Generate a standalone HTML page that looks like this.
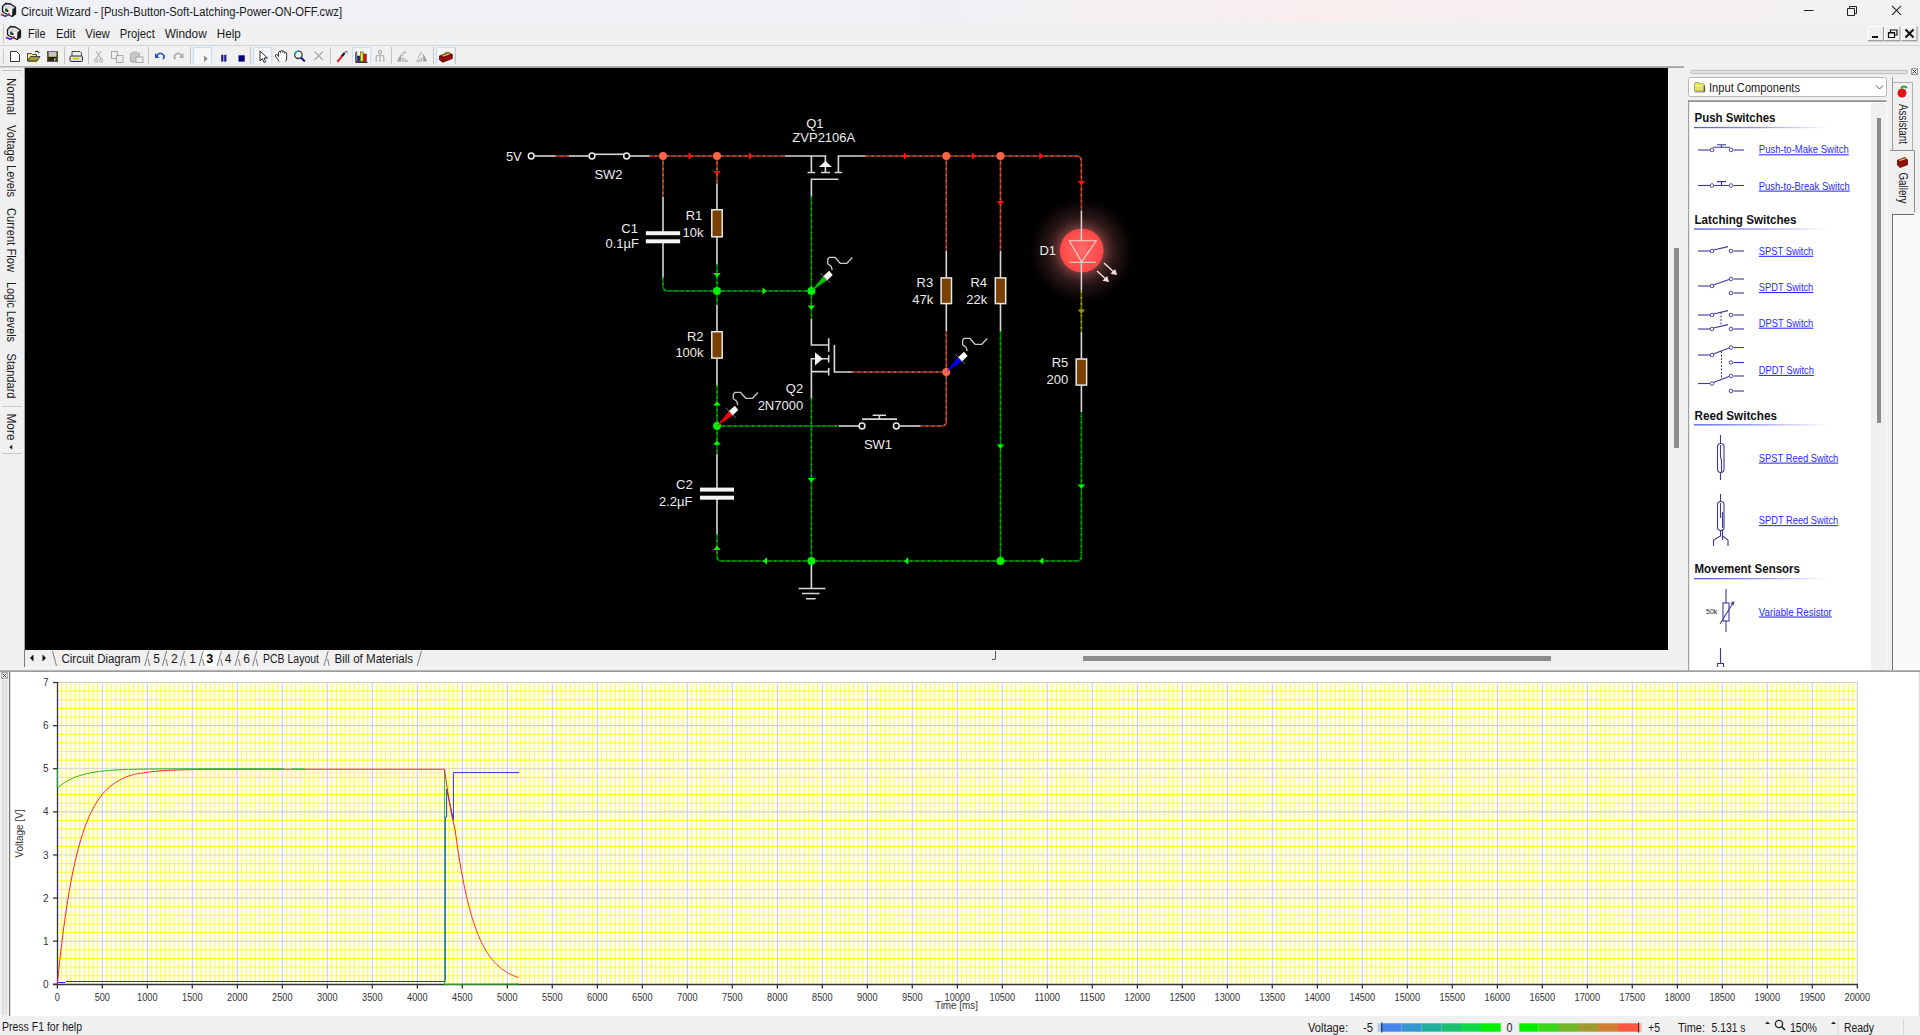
<!DOCTYPE html>
<html><head><meta charset="utf-8"><title>Circuit Wizard</title>
<style>html,body{margin:0;padding:0;width:1920px;height:1035px;overflow:hidden;background:#f0f0f0}
svg{display:block;font-family:"Liberation Sans",sans-serif}</style></head>
<body><svg width="1920" height="1035" viewBox="0 0 1920 1035"><rect x="0" y="0" width="1920" height="1035" fill="#f0f0f0"/><defs><linearGradient id="tg" x1="0" x2="1" y1="0" y2="0"><stop offset="0" stop-color="#eef1f6"/><stop offset="0.5" stop-color="#f0f0f4"/><stop offset="0.68" stop-color="#f8eeee"/><stop offset="0.85" stop-color="#f6f0f0"/><stop offset="1" stop-color="#f2f2f3"/></linearGradient></defs><rect x="0" y="0" width="1920" height="22" fill="url(#tg)" /><text x="21" y="15.5" font-size="12" fill="#1a1a1a" font-weight="normal" text-anchor="start" textLength="321" lengthAdjust="spacingAndGlyphs" >Circuit Wizard - [Push-Button-Soft-Latching-Power-ON-OFF.cwz]</text><line x1="0" y1="45.5" x2="1920" y2="45.5" stroke="#d4d4d4" stroke-width="1" /><line x1="3.5" y1="24" x2="3.5" y2="43" stroke="#c8c8c8" stroke-width="1" /><text x="28" y="38.3" font-size="12" fill="#1a1a1a" font-weight="normal" text-anchor="start" textLength="17.5" lengthAdjust="spacingAndGlyphs" >File</text><text x="56" y="38.3" font-size="12" fill="#1a1a1a" font-weight="normal" text-anchor="start" textLength="19.5" lengthAdjust="spacingAndGlyphs" >Edit</text><text x="85.3" y="38.3" font-size="12" fill="#1a1a1a" font-weight="normal" text-anchor="start" textLength="24.5" lengthAdjust="spacingAndGlyphs" >View</text><text x="119.8" y="38.3" font-size="12" fill="#1a1a1a" font-weight="normal" text-anchor="start" textLength="35" lengthAdjust="spacingAndGlyphs" >Project</text><text x="164.7" y="38.3" font-size="12" fill="#1a1a1a" font-weight="normal" text-anchor="start" textLength="42" lengthAdjust="spacingAndGlyphs" >Window</text><text x="216.8" y="38.3" font-size="12" fill="#1a1a1a" font-weight="normal" text-anchor="start" textLength="24" lengthAdjust="spacingAndGlyphs" >Help</text><rect x="0" y="66" width="1684" height="1.5" fill="#b4b4b4" /><path d="M1803.8,10.5 H1813.5" stroke="#222" stroke-width="1"/><path d="M1847.5,8.5 h7 v7 h-7 z" fill="none" stroke="#222" stroke-width="1"/><path d="M1849.5,8.5 v-2 h7 v7 h-2" fill="none" stroke="#222" stroke-width="1"/><path d="M1892,5.8 L1901,14.8 M1901,5.8 L1892,14.8" stroke="#222" stroke-width="1.1"/><rect x="1868" y="26.5" width="15.5" height="14" fill="#f0f0f0"/><path d="M1868,40.5 V26.5 H1883.5" stroke="#ffffff" stroke-width="1" fill="none"/><path d="M1883.5,26.5 V40.5 H1868" stroke="#a0a0a0" stroke-width="1.2" fill="none"/><path d="M1884.5,27 V41.5 H1868.5" stroke="#d0d0d0" stroke-width="1" fill="none"/><rect x="1884.5" y="26.5" width="15.5" height="14" fill="#f0f0f0"/><path d="M1884.5,40.5 V26.5 H1900.0" stroke="#ffffff" stroke-width="1" fill="none"/><path d="M1900.0,26.5 V40.5 H1884.5" stroke="#a0a0a0" stroke-width="1.2" fill="none"/><path d="M1901.0,27 V41.5 H1885.0" stroke="#d0d0d0" stroke-width="1" fill="none"/><rect x="1901.5" y="26.5" width="15.5" height="14" fill="#f0f0f0"/><path d="M1901.5,40.5 V26.5 H1917.0" stroke="#ffffff" stroke-width="1" fill="none"/><path d="M1917.0,26.5 V40.5 H1901.5" stroke="#a0a0a0" stroke-width="1.2" fill="none"/><path d="M1918.0,27 V41.5 H1902.0" stroke="#d0d0d0" stroke-width="1" fill="none"/><rect x="1872" y="36" width="6" height="2" fill="#111"/><path d="M1888.5,32.5 h6 v5 h-6 z M1890.5,32.5 v-2.5 h6.5 v5 h-2" fill="none" stroke="#111" stroke-width="1.2"/><rect x="1888.5" y="32" width="6" height="1.5" fill="#111"/><path d="M1905.5,29.5 L1913.5,37.5 M1913.5,29.5 L1905.5,37.5" stroke="#111" stroke-width="2"/><line x1="3.5" y1="49" x2="3.5" y2="64" stroke="#c8c8c8" stroke-width="1" /><rect x="25" y="67" width="1659" height="1" fill="#a0a0a0" /><rect x="24" y="67" width="1" height="583" fill="#a0a0a0" /><rect x="25" y="68" width="1643" height="582" fill="#000" /><rect x="0" y="68" width="24" height="583" fill="#f0f0f0" /><line x1="2" y1="70.5" x2="22" y2="70.5" stroke="#c0c0c0" stroke-width="1" /><text x="0" y="0" font-size="12" fill="#1a1a1a" text-anchor="middle" textLength="37" lengthAdjust="spacingAndGlyphs" transform="translate(7,96.5) rotate(90)">Normal</text><text x="0" y="0" font-size="12" fill="#1a1a1a" text-anchor="middle" textLength="72" lengthAdjust="spacingAndGlyphs" transform="translate(7,161) rotate(90)">Voltage Levels</text><text x="0" y="0" font-size="12" fill="#1a1a1a" text-anchor="middle" textLength="64" lengthAdjust="spacingAndGlyphs" transform="translate(7,240) rotate(90)">Current Flow</text><text x="0" y="0" font-size="12" fill="#1a1a1a" text-anchor="middle" textLength="60" lengthAdjust="spacingAndGlyphs" transform="translate(7,312) rotate(90)">Logic Levels</text><text x="0" y="0" font-size="12" fill="#1a1a1a" text-anchor="middle" textLength="45" lengthAdjust="spacingAndGlyphs" transform="translate(7,376) rotate(90)">Standard</text><line x1="2" y1="406.5" x2="22" y2="406.5" stroke="#c8c8c8" stroke-width="1" /><text x="0" y="0" font-size="12" fill="#1a1a1a" text-anchor="middle" textLength="27" lengthAdjust="spacingAndGlyphs" transform="translate(7,427) rotate(90)">More</text><path d="M12.2,444.8 L9.4,447.2 L12.2,449.6 Z" fill="#111"/><line x1="2" y1="453.5" x2="22" y2="453.5" stroke="#c8c8c8" stroke-width="1" /><rect x="1668" y="68" width="15" height="583" fill="#f0f0f0" /><rect x="1674" y="248" width="5" height="200" fill="#8c8c8c" /><rect x="1684" y="68" width="236" height="602" fill="#f0f0f0" /><rect x="1690.5" y="70.3" width="217" height="3.4" rx="1.6" fill="#dedede" stroke="#b4b4b4" stroke-width="0.8"/><path d="M1911.5,68.5 h6 v6 h-6 z" fill="none" stroke="#888" stroke-width="0.8"/><path d="M1912.5,69.5 l4,4 M1916.5,69.5 l-4,4" stroke="#333" stroke-width="1"/><rect x="1688.5" y="77.5" width="198" height="19" rx="2" fill="#fff" stroke="#b8b8b8"/><path d="M1694.5,84 q0,-1.5 1.5,-1.5 h3 l1,1.2 h3.5 l1.2,1 v6.3 h-10.2 z" fill="#e4e450" stroke="#777" stroke-width="0.6"/><path d="M1703.8,85.5 l0.8,0.5 v6.3 h-9.5 l-0.6,-0.6 h9.3 z" fill="#111"/><rect x="1695.5" y="85" width="7" height="1.2" fill="#f8f8a0"/><text x="1709" y="91.5" font-size="12" fill="#1a1a1a" font-weight="normal" text-anchor="start" textLength="91" lengthAdjust="spacingAndGlyphs" >Input Components</text><path d="M1876,85.5 l3.5,3.5 l3.5,-3.5" fill="none" stroke="#555" stroke-width="1"/><rect x="1688" y="100" width="199" height="571" fill="#ffffff" /><rect x="1688" y="100" width="1.2" height="571" fill="#a0a0a0" /><rect x="1688" y="100.3" width="199" height="1.7" fill="#8e8e8e" /><rect x="1886.5" y="100" width="1" height="571" fill="#f4f4f4" /><rect x="1871" y="103" width="15" height="568" fill="#f0f0f0" /><rect x="1877" y="118" width="4" height="305" fill="#8c8c8c" /><rect x="1893" y="214" width="27" height="456" fill="#f9f9f9" /><rect x="1892" y="214" width="1" height="456" fill="#707070" /><rect x="1892" y="214" width="22" height="1" fill="#707070" /><rect x="1892" y="77" width="1" height="73" fill="#9a9a9a" /><path d="M1892.5,82.5 h20 v68" fill="none" stroke="#b0b0b0" stroke-width="1"/><path d="M1890,150.5 h24.5 v62" fill="none" stroke="#909090" stroke-width="1"/><circle cx="1902" cy="93" r="4.5" fill="#d81818"/><path d="M1901,88 q3,-3 6,0" stroke="#2a9a2a" stroke-width="2" fill="none"/><text x="0" y="0" font-size="12" fill="#1a1a1a" text-anchor="middle" textLength="40" lengthAdjust="spacingAndGlyphs" transform="translate(1898.5,124) rotate(90)">Assistant</text><path d="M1897,160 l8,-3 l3,3 v5 l-8,3 l-3,-3 z" fill="#8a1010"/><path d="M1899,160 l6,-2 l1,1 l-6,2 z" fill="#e0d040"/><text x="0" y="0" font-size="12" fill="#1a1a1a" text-anchor="middle" textLength="31" lengthAdjust="spacingAndGlyphs" transform="translate(1898.5,188) rotate(90)">Gallery</text><rect x="25" y="650" width="971" height="17" fill="#f0f0f0" /><rect x="24" y="650" width="1" height="17" fill="#808080" /><path d="M30,658 l3.5,-3.5 v7 z" fill="#111"/><path d="M46,658 l-3.5,-3.5 v7 z" fill="#111"/><path d="M201,651 h18.5 l-3,15.5 h-12 z" fill="#ffffff"/><path d="M52.5,651 l4,15" stroke="#707070" stroke-width="0.9"/><path d="M144.6,666 L148.79999999999998,651 M148.2,659 L149.79999999999998,666" stroke="#707070" stroke-width="0.9" fill="none"/><path d="M162.4,666 L166.6,651 M166.0,659 L167.6,666" stroke="#707070" stroke-width="0.9" fill="none"/><path d="M180.2,666 L184.39999999999998,651 M183.79999999999998,659 L185.39999999999998,666" stroke="#707070" stroke-width="0.9" fill="none"/><path d="M199,666 L203.2,651 M202.6,659 L204.2,666" stroke="#707070" stroke-width="0.9" fill="none"/><path d="M217.2,666 L221.39999999999998,651 M220.79999999999998,659 L222.39999999999998,666" stroke="#707070" stroke-width="0.9" fill="none"/><path d="M235,666 L239.2,651 M238.6,659 L240.2,666" stroke="#707070" stroke-width="0.9" fill="none"/><path d="M252.6,666 L256.8,651 M256.2,659 L257.8,666" stroke="#707070" stroke-width="0.9" fill="none"/><path d="M324,666 L328.2,651 M327.6,659 L329.2,666" stroke="#707070" stroke-width="0.9" fill="none"/><path d="M417.2,666 L421.4,651" stroke="#707070" stroke-width="0.9"/><rect x="25" y="667" width="1659" height="1.2" fill="#f8f8f8" /><text x="61.5" y="662.5" font-size="12" fill="#1a1a1a" font-weight="normal" text-anchor="start" textLength="79" lengthAdjust="spacingAndGlyphs" >Circuit Diagram</text><text x="153.2" y="662.5" font-size="12" fill="#1a1a1a" font-weight="normal" text-anchor="start" textLength="6.7" lengthAdjust="spacingAndGlyphs" >5</text><text x="171" y="662.5" font-size="12" fill="#1a1a1a" font-weight="normal" text-anchor="start" textLength="6.7" lengthAdjust="spacingAndGlyphs" >2</text><text x="189.2" y="662.5" font-size="12" fill="#1a1a1a" font-weight="normal" text-anchor="start" textLength="6.7" lengthAdjust="spacingAndGlyphs" >1</text><text x="224.8" y="662.5" font-size="12" fill="#1a1a1a" font-weight="normal" text-anchor="start" textLength="6.7" lengthAdjust="spacingAndGlyphs" >4</text><text x="243.2" y="662.5" font-size="12" fill="#1a1a1a" font-weight="normal" text-anchor="start" textLength="6.7" lengthAdjust="spacingAndGlyphs" >6</text><text x="206.2" y="662.5" font-size="12" fill="#000" font-weight="bold" text-anchor="start" textLength="7" lengthAdjust="spacingAndGlyphs" >3</text><text x="263" y="662.5" font-size="12" fill="#1a1a1a" font-weight="normal" text-anchor="start" textLength="56" lengthAdjust="spacingAndGlyphs" >PCB Layout</text><text x="334.5" y="662.5" font-size="12" fill="#1a1a1a" font-weight="normal" text-anchor="start" textLength="78.5" lengthAdjust="spacingAndGlyphs" >Bill of Materials</text><path d="M995.5,651 v8 q0,0.5 -0.5,0.5 h-3" stroke="#555" stroke-width="1" fill="none"/><rect x="1083" y="656" width="468" height="5" fill="#8c8c8c" /><rect x="0" y="670.3" width="1920" height="1.7" fill="#9c9c9c" /><rect x="0" y="672" width="10" height="344" fill="#f0f0f0" /><rect x="9" y="672" width="1.5" height="344" fill="#7a7a7a" /><rect x="10.5" y="672" width="1908.5" height="344" fill="#ffffff" /><rect x="1918.5" y="672" width="1.5" height="344" fill="#e0e0e0" /><path d="M1.5,672.5 h6 v6 h-6 z" fill="none" stroke="#999" stroke-width="0.8"/><path d="M2.5,673.5 l4,4 M6.5,673.5 l-4,4" stroke="#444" stroke-width="1"/><rect x="2.5" y="680" width="1" height="335" fill="#c8c8c8" /><rect x="5.5" y="680" width="1" height="335" fill="#c8c8c8" /><path d="M61.80,682.5V984M66.30,682.5V984M70.80,682.5V984M75.30,682.5V984M79.80,682.5V984M84.30,682.5V984M88.80,682.5V984M93.30,682.5V984M97.80,682.5V984M106.80,682.5V984M111.30,682.5V984M115.80,682.5V984M120.30,682.5V984M124.80,682.5V984M129.30,682.5V984M133.80,682.5V984M138.30,682.5V984M142.80,682.5V984M151.80,682.5V984M156.30,682.5V984M160.80,682.5V984M165.30,682.5V984M169.80,682.5V984M174.30,682.5V984M178.80,682.5V984M183.30,682.5V984M187.80,682.5V984M196.80,682.5V984M201.30,682.5V984M205.80,682.5V984M210.30,682.5V984M214.80,682.5V984M219.30,682.5V984M223.80,682.5V984M228.30,682.5V984M232.80,682.5V984M241.80,682.5V984M246.30,682.5V984M250.80,682.5V984M255.30,682.5V984M259.80,682.5V984M264.30,682.5V984M268.80,682.5V984M273.30,682.5V984M277.80,682.5V984M286.80,682.5V984M291.30,682.5V984M295.80,682.5V984M300.30,682.5V984M304.80,682.5V984M309.30,682.5V984M313.80,682.5V984M318.30,682.5V984M322.80,682.5V984M331.80,682.5V984M336.30,682.5V984M340.80,682.5V984M345.30,682.5V984M349.80,682.5V984M354.30,682.5V984M358.80,682.5V984M363.30,682.5V984M367.80,682.5V984M376.80,682.5V984M381.30,682.5V984M385.80,682.5V984M390.30,682.5V984M394.80,682.5V984M399.30,682.5V984M403.80,682.5V984M408.30,682.5V984M412.80,682.5V984M421.80,682.5V984M426.30,682.5V984M430.80,682.5V984M435.30,682.5V984M439.80,682.5V984M444.30,682.5V984M448.80,682.5V984M453.30,682.5V984M457.80,682.5V984M466.80,682.5V984M471.30,682.5V984M475.80,682.5V984M480.30,682.5V984M484.80,682.5V984M489.30,682.5V984M493.80,682.5V984M498.30,682.5V984M502.80,682.5V984M511.80,682.5V984M516.30,682.5V984M520.80,682.5V984M525.30,682.5V984M529.80,682.5V984M534.30,682.5V984M538.80,682.5V984M543.30,682.5V984M547.80,682.5V984M556.80,682.5V984M561.30,682.5V984M565.80,682.5V984M570.30,682.5V984M574.80,682.5V984M579.30,682.5V984M583.80,682.5V984M588.30,682.5V984M592.80,682.5V984M601.80,682.5V984M606.30,682.5V984M610.80,682.5V984M615.30,682.5V984M619.80,682.5V984M624.30,682.5V984M628.80,682.5V984M633.30,682.5V984M637.80,682.5V984M646.80,682.5V984M651.30,682.5V984M655.80,682.5V984M660.30,682.5V984M664.80,682.5V984M669.30,682.5V984M673.80,682.5V984M678.30,682.5V984M682.80,682.5V984M691.80,682.5V984M696.30,682.5V984M700.80,682.5V984M705.30,682.5V984M709.80,682.5V984M714.30,682.5V984M718.80,682.5V984M723.30,682.5V984M727.80,682.5V984M736.80,682.5V984M741.30,682.5V984M745.80,682.5V984M750.30,682.5V984M754.80,682.5V984M759.30,682.5V984M763.80,682.5V984M768.30,682.5V984M772.80,682.5V984M781.80,682.5V984M786.30,682.5V984M790.80,682.5V984M795.30,682.5V984M799.80,682.5V984M804.30,682.5V984M808.80,682.5V984M813.30,682.5V984M817.80,682.5V984M826.80,682.5V984M831.30,682.5V984M835.80,682.5V984M840.30,682.5V984M844.80,682.5V984M849.30,682.5V984M853.80,682.5V984M858.30,682.5V984M862.80,682.5V984M871.80,682.5V984M876.30,682.5V984M880.80,682.5V984M885.30,682.5V984M889.80,682.5V984M894.30,682.5V984M898.80,682.5V984M903.30,682.5V984M907.80,682.5V984M916.80,682.5V984M921.30,682.5V984M925.80,682.5V984M930.30,682.5V984M934.80,682.5V984M939.30,682.5V984M943.80,682.5V984M948.30,682.5V984M952.80,682.5V984M961.80,682.5V984M966.30,682.5V984M970.80,682.5V984M975.30,682.5V984M979.80,682.5V984M984.30,682.5V984M988.80,682.5V984M993.30,682.5V984M997.80,682.5V984M1006.80,682.5V984M1011.30,682.5V984M1015.80,682.5V984M1020.30,682.5V984M1024.80,682.5V984M1029.30,682.5V984M1033.80,682.5V984M1038.30,682.5V984M1042.80,682.5V984M1051.80,682.5V984M1056.30,682.5V984M1060.80,682.5V984M1065.30,682.5V984M1069.80,682.5V984M1074.30,682.5V984M1078.80,682.5V984M1083.30,682.5V984M1087.80,682.5V984M1096.80,682.5V984M1101.30,682.5V984M1105.80,682.5V984M1110.30,682.5V984M1114.80,682.5V984M1119.30,682.5V984M1123.80,682.5V984M1128.30,682.5V984M1132.80,682.5V984M1141.80,682.5V984M1146.30,682.5V984M1150.80,682.5V984M1155.30,682.5V984M1159.80,682.5V984M1164.30,682.5V984M1168.80,682.5V984M1173.30,682.5V984M1177.80,682.5V984M1186.80,682.5V984M1191.30,682.5V984M1195.80,682.5V984M1200.30,682.5V984M1204.80,682.5V984M1209.30,682.5V984M1213.80,682.5V984M1218.30,682.5V984M1222.80,682.5V984M1231.80,682.5V984M1236.30,682.5V984M1240.80,682.5V984M1245.30,682.5V984M1249.80,682.5V984M1254.30,682.5V984M1258.80,682.5V984M1263.30,682.5V984M1267.80,682.5V984M1276.80,682.5V984M1281.30,682.5V984M1285.80,682.5V984M1290.30,682.5V984M1294.80,682.5V984M1299.30,682.5V984M1303.80,682.5V984M1308.30,682.5V984M1312.80,682.5V984M1321.80,682.5V984M1326.30,682.5V984M1330.80,682.5V984M1335.30,682.5V984M1339.80,682.5V984M1344.30,682.5V984M1348.80,682.5V984M1353.30,682.5V984M1357.80,682.5V984M1366.80,682.5V984M1371.30,682.5V984M1375.80,682.5V984M1380.30,682.5V984M1384.80,682.5V984M1389.30,682.5V984M1393.80,682.5V984M1398.30,682.5V984M1402.80,682.5V984M1411.80,682.5V984M1416.30,682.5V984M1420.80,682.5V984M1425.30,682.5V984M1429.80,682.5V984M1434.30,682.5V984M1438.80,682.5V984M1443.30,682.5V984M1447.80,682.5V984M1456.80,682.5V984M1461.30,682.5V984M1465.80,682.5V984M1470.30,682.5V984M1474.80,682.5V984M1479.30,682.5V984M1483.80,682.5V984M1488.30,682.5V984M1492.80,682.5V984M1501.80,682.5V984M1506.30,682.5V984M1510.80,682.5V984M1515.30,682.5V984M1519.80,682.5V984M1524.30,682.5V984M1528.80,682.5V984M1533.30,682.5V984M1537.80,682.5V984M1546.80,682.5V984M1551.30,682.5V984M1555.80,682.5V984M1560.30,682.5V984M1564.80,682.5V984M1569.30,682.5V984M1573.80,682.5V984M1578.30,682.5V984M1582.80,682.5V984M1591.80,682.5V984M1596.30,682.5V984M1600.80,682.5V984M1605.30,682.5V984M1609.80,682.5V984M1614.30,682.5V984M1618.80,682.5V984M1623.30,682.5V984M1627.80,682.5V984M1636.80,682.5V984M1641.30,682.5V984M1645.80,682.5V984M1650.30,682.5V984M1654.80,682.5V984M1659.30,682.5V984M1663.80,682.5V984M1668.30,682.5V984M1672.80,682.5V984M1681.80,682.5V984M1686.30,682.5V984M1690.80,682.5V984M1695.30,682.5V984M1699.80,682.5V984M1704.30,682.5V984M1708.80,682.5V984M1713.30,682.5V984M1717.80,682.5V984M1726.80,682.5V984M1731.30,682.5V984M1735.80,682.5V984M1740.30,682.5V984M1744.80,682.5V984M1749.30,682.5V984M1753.80,682.5V984M1758.30,682.5V984M1762.80,682.5V984M1771.80,682.5V984M1776.30,682.5V984M1780.80,682.5V984M1785.30,682.5V984M1789.80,682.5V984M1794.30,682.5V984M1798.80,682.5V984M1803.30,682.5V984M1807.80,682.5V984M1816.80,682.5V984M1821.30,682.5V984M1825.80,682.5V984M1830.30,682.5V984M1834.80,682.5V984M1839.30,682.5V984M1843.80,682.5V984M1848.30,682.5V984M1852.80,682.5V984" stroke="#ffff30" stroke-width="1.1" fill="none"/><path d="M57.5,975.68H1857M57.5,967.06H1857M57.5,958.43H1857M57.5,949.81H1857M57.5,932.57H1857M57.5,923.95H1857M57.5,915.32H1857M57.5,906.70H1857M57.5,889.46H1857M57.5,880.84H1857M57.5,872.21H1857M57.5,863.59H1857M57.5,846.35H1857M57.5,837.73H1857M57.5,829.10H1857M57.5,820.48H1857M57.5,803.24H1857M57.5,794.62H1857M57.5,785.99H1857M57.5,777.37H1857M57.5,760.13H1857M57.5,751.51H1857M57.5,742.88H1857M57.5,734.26H1857M57.5,717.02H1857M57.5,708.40H1857M57.5,699.77H1857M57.5,691.15H1857" stroke="#ffff30" stroke-width="1.1" fill="none"/><path d="M102.30,682.5V984M147.30,682.5V984M192.30,682.5V984M237.30,682.5V984M282.30,682.5V984M327.30,682.5V984M372.30,682.5V984M417.30,682.5V984M462.30,682.5V984M507.30,682.5V984M552.30,682.5V984M597.30,682.5V984M642.30,682.5V984M687.30,682.5V984M732.30,682.5V984M777.30,682.5V984M822.30,682.5V984M867.30,682.5V984M912.30,682.5V984M957.30,682.5V984M1002.30,682.5V984M1047.30,682.5V984M1092.30,682.5V984M1137.30,682.5V984M1182.30,682.5V984M1227.30,682.5V984M1272.30,682.5V984M1317.30,682.5V984M1362.30,682.5V984M1407.30,682.5V984M1452.30,682.5V984M1497.30,682.5V984M1542.30,682.5V984M1587.30,682.5V984M1632.30,682.5V984M1677.30,682.5V984M1722.30,682.5V984M1767.30,682.5V984M1812.30,682.5V984M1857.30,682.5V984M57.5,941.19H1857M57.5,898.08H1857M57.5,854.97H1857M57.5,811.86H1857M57.5,768.75H1857M57.5,725.64H1857M57.5,682.53H1857" stroke="#cfcfcf" stroke-width="1.1" fill="none"/><line x1="57.5" y1="682" x2="57.5" y2="985" stroke="#333" stroke-width="1.3" /><line x1="53" y1="984.5" x2="1858" y2="984.5" stroke="#333" stroke-width="1.3" /><line x1="53" y1="984.3" x2="57.5" y2="984.3" stroke="#333" stroke-width="1.3" /><text x="48.5" y="987.9" font-size="10" fill="#333" font-weight="normal" text-anchor="end" >0</text><line x1="53" y1="941.1899999999999" x2="57.5" y2="941.1899999999999" stroke="#333" stroke-width="1.3" /><text x="48.5" y="944.79" font-size="10" fill="#333" font-weight="normal" text-anchor="end" >1</text><line x1="53" y1="898.0799999999999" x2="57.5" y2="898.0799999999999" stroke="#333" stroke-width="1.3" /><text x="48.5" y="901.68" font-size="10" fill="#333" font-weight="normal" text-anchor="end" >2</text><line x1="53" y1="854.97" x2="57.5" y2="854.97" stroke="#333" stroke-width="1.3" /><text x="48.5" y="858.57" font-size="10" fill="#333" font-weight="normal" text-anchor="end" >3</text><line x1="53" y1="811.8599999999999" x2="57.5" y2="811.8599999999999" stroke="#333" stroke-width="1.3" /><text x="48.5" y="815.4599999999999" font-size="10" fill="#333" font-weight="normal" text-anchor="end" >4</text><line x1="53" y1="768.75" x2="57.5" y2="768.75" stroke="#333" stroke-width="1.3" /><text x="48.5" y="772.35" font-size="10" fill="#333" font-weight="normal" text-anchor="end" >5</text><line x1="53" y1="725.64" x2="57.5" y2="725.64" stroke="#333" stroke-width="1.3" /><text x="48.5" y="729.24" font-size="10" fill="#333" font-weight="normal" text-anchor="end" >6</text><line x1="53" y1="682.53" x2="57.5" y2="682.53" stroke="#333" stroke-width="1.3" /><text x="48.5" y="686.13" font-size="10" fill="#333" font-weight="normal" text-anchor="end" >7</text><line x1="57.3" y1="984.5" x2="57.3" y2="988.5" stroke="#333" stroke-width="1.3" /><text x="57.3" y="1000.8" font-size="10" fill="#333" font-weight="normal" text-anchor="middle" textLength="5.1" lengthAdjust="spacingAndGlyphs" >0</text><line x1="102.3" y1="984.5" x2="102.3" y2="988.5" stroke="#333" stroke-width="1.3" /><text x="102.3" y="1000.8" font-size="10" fill="#333" font-weight="normal" text-anchor="middle" textLength="15.3" lengthAdjust="spacingAndGlyphs" >500</text><line x1="147.3" y1="984.5" x2="147.3" y2="988.5" stroke="#333" stroke-width="1.3" /><text x="147.3" y="1000.8" font-size="10" fill="#333" font-weight="normal" text-anchor="middle" textLength="20.4" lengthAdjust="spacingAndGlyphs" >1000</text><line x1="192.3" y1="984.5" x2="192.3" y2="988.5" stroke="#333" stroke-width="1.3" /><text x="192.3" y="1000.8" font-size="10" fill="#333" font-weight="normal" text-anchor="middle" textLength="20.4" lengthAdjust="spacingAndGlyphs" >1500</text><line x1="237.3" y1="984.5" x2="237.3" y2="988.5" stroke="#333" stroke-width="1.3" /><text x="237.3" y="1000.8" font-size="10" fill="#333" font-weight="normal" text-anchor="middle" textLength="20.4" lengthAdjust="spacingAndGlyphs" >2000</text><line x1="282.3" y1="984.5" x2="282.3" y2="988.5" stroke="#333" stroke-width="1.3" /><text x="282.3" y="1000.8" font-size="10" fill="#333" font-weight="normal" text-anchor="middle" textLength="20.4" lengthAdjust="spacingAndGlyphs" >2500</text><line x1="327.3" y1="984.5" x2="327.3" y2="988.5" stroke="#333" stroke-width="1.3" /><text x="327.3" y="1000.8" font-size="10" fill="#333" font-weight="normal" text-anchor="middle" textLength="20.4" lengthAdjust="spacingAndGlyphs" >3000</text><line x1="372.3" y1="984.5" x2="372.3" y2="988.5" stroke="#333" stroke-width="1.3" /><text x="372.3" y="1000.8" font-size="10" fill="#333" font-weight="normal" text-anchor="middle" textLength="20.4" lengthAdjust="spacingAndGlyphs" >3500</text><line x1="417.3" y1="984.5" x2="417.3" y2="988.5" stroke="#333" stroke-width="1.3" /><text x="417.3" y="1000.8" font-size="10" fill="#333" font-weight="normal" text-anchor="middle" textLength="20.4" lengthAdjust="spacingAndGlyphs" >4000</text><line x1="462.3" y1="984.5" x2="462.3" y2="988.5" stroke="#333" stroke-width="1.3" /><text x="462.3" y="1000.8" font-size="10" fill="#333" font-weight="normal" text-anchor="middle" textLength="20.4" lengthAdjust="spacingAndGlyphs" >4500</text><line x1="507.3" y1="984.5" x2="507.3" y2="988.5" stroke="#333" stroke-width="1.3" /><text x="507.3" y="1000.8" font-size="10" fill="#333" font-weight="normal" text-anchor="middle" textLength="20.4" lengthAdjust="spacingAndGlyphs" >5000</text><line x1="552.3" y1="984.5" x2="552.3" y2="988.5" stroke="#333" stroke-width="1.3" /><text x="552.3" y="1000.8" font-size="10" fill="#333" font-weight="normal" text-anchor="middle" textLength="20.4" lengthAdjust="spacingAndGlyphs" >5500</text><line x1="597.3" y1="984.5" x2="597.3" y2="988.5" stroke="#333" stroke-width="1.3" /><text x="597.3" y="1000.8" font-size="10" fill="#333" font-weight="normal" text-anchor="middle" textLength="20.4" lengthAdjust="spacingAndGlyphs" >6000</text><line x1="642.3" y1="984.5" x2="642.3" y2="988.5" stroke="#333" stroke-width="1.3" /><text x="642.3" y="1000.8" font-size="10" fill="#333" font-weight="normal" text-anchor="middle" textLength="20.4" lengthAdjust="spacingAndGlyphs" >6500</text><line x1="687.3" y1="984.5" x2="687.3" y2="988.5" stroke="#333" stroke-width="1.3" /><text x="687.3" y="1000.8" font-size="10" fill="#333" font-weight="normal" text-anchor="middle" textLength="20.4" lengthAdjust="spacingAndGlyphs" >7000</text><line x1="732.3" y1="984.5" x2="732.3" y2="988.5" stroke="#333" stroke-width="1.3" /><text x="732.3" y="1000.8" font-size="10" fill="#333" font-weight="normal" text-anchor="middle" textLength="20.4" lengthAdjust="spacingAndGlyphs" >7500</text><line x1="777.3" y1="984.5" x2="777.3" y2="988.5" stroke="#333" stroke-width="1.3" /><text x="777.3" y="1000.8" font-size="10" fill="#333" font-weight="normal" text-anchor="middle" textLength="20.4" lengthAdjust="spacingAndGlyphs" >8000</text><line x1="822.3" y1="984.5" x2="822.3" y2="988.5" stroke="#333" stroke-width="1.3" /><text x="822.3" y="1000.8" font-size="10" fill="#333" font-weight="normal" text-anchor="middle" textLength="20.4" lengthAdjust="spacingAndGlyphs" >8500</text><line x1="867.3" y1="984.5" x2="867.3" y2="988.5" stroke="#333" stroke-width="1.3" /><text x="867.3" y="1000.8" font-size="10" fill="#333" font-weight="normal" text-anchor="middle" textLength="20.4" lengthAdjust="spacingAndGlyphs" >9000</text><line x1="912.3" y1="984.5" x2="912.3" y2="988.5" stroke="#333" stroke-width="1.3" /><text x="912.3" y="1000.8" font-size="10" fill="#333" font-weight="normal" text-anchor="middle" textLength="20.4" lengthAdjust="spacingAndGlyphs" >9500</text><line x1="957.3" y1="984.5" x2="957.3" y2="988.5" stroke="#333" stroke-width="1.3" /><text x="957.3" y="1000.8" font-size="10" fill="#333" font-weight="normal" text-anchor="middle" textLength="25.5" lengthAdjust="spacingAndGlyphs" >10000</text><line x1="1002.3" y1="984.5" x2="1002.3" y2="988.5" stroke="#333" stroke-width="1.3" /><text x="1002.3" y="1000.8" font-size="10" fill="#333" font-weight="normal" text-anchor="middle" textLength="25.5" lengthAdjust="spacingAndGlyphs" >10500</text><line x1="1047.3" y1="984.5" x2="1047.3" y2="988.5" stroke="#333" stroke-width="1.3" /><text x="1047.3" y="1000.8" font-size="10" fill="#333" font-weight="normal" text-anchor="middle" textLength="25.5" lengthAdjust="spacingAndGlyphs" >11000</text><line x1="1092.3" y1="984.5" x2="1092.3" y2="988.5" stroke="#333" stroke-width="1.3" /><text x="1092.3" y="1000.8" font-size="10" fill="#333" font-weight="normal" text-anchor="middle" textLength="25.5" lengthAdjust="spacingAndGlyphs" >11500</text><line x1="1137.3" y1="984.5" x2="1137.3" y2="988.5" stroke="#333" stroke-width="1.3" /><text x="1137.3" y="1000.8" font-size="10" fill="#333" font-weight="normal" text-anchor="middle" textLength="25.5" lengthAdjust="spacingAndGlyphs" >12000</text><line x1="1182.3" y1="984.5" x2="1182.3" y2="988.5" stroke="#333" stroke-width="1.3" /><text x="1182.3" y="1000.8" font-size="10" fill="#333" font-weight="normal" text-anchor="middle" textLength="25.5" lengthAdjust="spacingAndGlyphs" >12500</text><line x1="1227.3" y1="984.5" x2="1227.3" y2="988.5" stroke="#333" stroke-width="1.3" /><text x="1227.3" y="1000.8" font-size="10" fill="#333" font-weight="normal" text-anchor="middle" textLength="25.5" lengthAdjust="spacingAndGlyphs" >13000</text><line x1="1272.3" y1="984.5" x2="1272.3" y2="988.5" stroke="#333" stroke-width="1.3" /><text x="1272.3" y="1000.8" font-size="10" fill="#333" font-weight="normal" text-anchor="middle" textLength="25.5" lengthAdjust="spacingAndGlyphs" >13500</text><line x1="1317.3" y1="984.5" x2="1317.3" y2="988.5" stroke="#333" stroke-width="1.3" /><text x="1317.3" y="1000.8" font-size="10" fill="#333" font-weight="normal" text-anchor="middle" textLength="25.5" lengthAdjust="spacingAndGlyphs" >14000</text><line x1="1362.3" y1="984.5" x2="1362.3" y2="988.5" stroke="#333" stroke-width="1.3" /><text x="1362.3" y="1000.8" font-size="10" fill="#333" font-weight="normal" text-anchor="middle" textLength="25.5" lengthAdjust="spacingAndGlyphs" >14500</text><line x1="1407.3" y1="984.5" x2="1407.3" y2="988.5" stroke="#333" stroke-width="1.3" /><text x="1407.3" y="1000.8" font-size="10" fill="#333" font-weight="normal" text-anchor="middle" textLength="25.5" lengthAdjust="spacingAndGlyphs" >15000</text><line x1="1452.3" y1="984.5" x2="1452.3" y2="988.5" stroke="#333" stroke-width="1.3" /><text x="1452.3" y="1000.8" font-size="10" fill="#333" font-weight="normal" text-anchor="middle" textLength="25.5" lengthAdjust="spacingAndGlyphs" >15500</text><line x1="1497.3" y1="984.5" x2="1497.3" y2="988.5" stroke="#333" stroke-width="1.3" /><text x="1497.3" y="1000.8" font-size="10" fill="#333" font-weight="normal" text-anchor="middle" textLength="25.5" lengthAdjust="spacingAndGlyphs" >16000</text><line x1="1542.3" y1="984.5" x2="1542.3" y2="988.5" stroke="#333" stroke-width="1.3" /><text x="1542.3" y="1000.8" font-size="10" fill="#333" font-weight="normal" text-anchor="middle" textLength="25.5" lengthAdjust="spacingAndGlyphs" >16500</text><line x1="1587.3" y1="984.5" x2="1587.3" y2="988.5" stroke="#333" stroke-width="1.3" /><text x="1587.3" y="1000.8" font-size="10" fill="#333" font-weight="normal" text-anchor="middle" textLength="25.5" lengthAdjust="spacingAndGlyphs" >17000</text><line x1="1632.3" y1="984.5" x2="1632.3" y2="988.5" stroke="#333" stroke-width="1.3" /><text x="1632.3" y="1000.8" font-size="10" fill="#333" font-weight="normal" text-anchor="middle" textLength="25.5" lengthAdjust="spacingAndGlyphs" >17500</text><line x1="1677.3" y1="984.5" x2="1677.3" y2="988.5" stroke="#333" stroke-width="1.3" /><text x="1677.3" y="1000.8" font-size="10" fill="#333" font-weight="normal" text-anchor="middle" textLength="25.5" lengthAdjust="spacingAndGlyphs" >18000</text><line x1="1722.3" y1="984.5" x2="1722.3" y2="988.5" stroke="#333" stroke-width="1.3" /><text x="1722.3" y="1000.8" font-size="10" fill="#333" font-weight="normal" text-anchor="middle" textLength="25.5" lengthAdjust="spacingAndGlyphs" >18500</text><line x1="1767.3" y1="984.5" x2="1767.3" y2="988.5" stroke="#333" stroke-width="1.3" /><text x="1767.3" y="1000.8" font-size="10" fill="#333" font-weight="normal" text-anchor="middle" textLength="25.5" lengthAdjust="spacingAndGlyphs" >19000</text><line x1="1812.3" y1="984.5" x2="1812.3" y2="988.5" stroke="#333" stroke-width="1.3" /><text x="1812.3" y="1000.8" font-size="10" fill="#333" font-weight="normal" text-anchor="middle" textLength="25.5" lengthAdjust="spacingAndGlyphs" >19500</text><line x1="1857.3" y1="984.5" x2="1857.3" y2="988.5" stroke="#333" stroke-width="1.3" /><text x="1857.3" y="1000.8" font-size="10" fill="#333" font-weight="normal" text-anchor="middle" textLength="25.5" lengthAdjust="spacingAndGlyphs" >20000</text><text x="0" y="0" font-size="10" fill="#333" text-anchor="middle" transform="translate(23,833.5) rotate(-90)">Voltage [V]</text><text x="956.5" y="1008.7" font-size="10" fill="#333" font-weight="normal" text-anchor="middle" textLength="43" lengthAdjust="spacingAndGlyphs" >Time [ms]</text><path d="M57.30,982.50 L65.00,982.50 L66.00,981.50 L445.30,981.50 L445.30,817.00 L446.60,817.00 L446.60,789.00 L453.40,820.00 L453.40,772.60 L519.09,772.60" stroke="#3030f0" stroke-width="1.0" fill="none" stroke-linejoin="round"/><path d="M444.60,768.75 L444.60,984.30 L519.09,984.00" stroke="#20c020" stroke-width="1.0" fill="none" stroke-linejoin="round"/><path d="M57.30,984.30 L57.30,984.30 L58.79,969.65 L60.28,956.00 L61.77,943.27 L63.25,931.41 L64.74,920.36 L66.23,910.06 L67.72,900.45 L69.21,891.50 L70.70,883.16 L72.18,875.39 L73.67,868.14 L75.16,861.39 L76.65,855.09 L78.14,849.22 L79.63,843.75 L81.12,838.66 L82.60,833.91 L84.09,829.48 L85.58,825.35 L87.07,821.51 L88.56,817.92 L90.05,814.58 L91.53,811.46 L93.02,808.56 L94.51,805.86 L96.00,803.33 L97.49,800.98 L98.98,798.79 L100.47,796.75 L101.95,794.85 L103.44,793.08 L104.93,791.42 L106.42,789.88 L107.91,788.45 L109.40,787.11 L110.88,785.86 L112.37,784.70 L113.86,783.61 L115.35,782.60 L116.84,781.66 L118.33,780.78 L119.82,779.97 L121.30,779.20 L122.79,778.49 L124.28,777.83 L125.77,777.21 L127.26,776.64 L128.75,776.10 L130.23,775.60 L131.72,775.14 L133.21,774.70 L134.70,774.30 L136.19,773.92 L137.68,773.57 L139.17,773.24 L140.65,773.44 L142.14,773.15 L143.63,772.89 L145.12,772.64 L146.61,772.41 L148.10,772.20 L149.58,772.00 L151.07,771.81 L152.56,771.63 L154.05,771.47 L155.54,771.32 L157.03,771.18 L158.52,771.05 L160.00,770.93 L161.49,770.81 L162.98,770.71 L164.47,770.61 L165.96,770.52 L167.45,770.43 L168.93,770.35 L170.42,770.27 L171.91,770.21 L173.40,770.14 L174.89,770.08 L176.38,770.02 L177.87,769.97 L179.35,769.92 L180.84,769.88 L182.33,769.83 L183.82,769.79 L185.31,769.76 L186.80,769.72 L188.28,769.69 L189.77,769.66 L191.26,769.63 L192.75,769.61 L194.24,769.58 L195.73,769.56 L197.22,769.54 L198.70,769.52 L200.19,769.50 L201.68,769.48 L203.17,769.47 L204.66,769.45 L206.15,769.44 L207.63,769.43 L209.12,769.41 L210.61,769.40 L212.10,769.39 L213.59,769.38 L215.08,769.37 L216.57,769.37 L218.05,769.36 L219.54,769.35 L221.03,769.34 L222.52,769.34 L224.01,769.33 L225.50,769.33 L226.98,769.32 L228.47,769.32 L229.96,769.31 L231.45,769.31 L232.94,769.30 L234.43,769.30 L235.92,769.30 L237.40,769.29 L238.89,769.29 L240.38,769.29 L241.87,769.28 L243.36,769.28 L244.85,769.28 L246.33,769.28 L247.82,769.28 L249.31,769.27 L250.80,769.27 L252.29,769.27 L253.78,769.27 L255.27,769.27 L256.75,769.27 L258.24,769.27 L259.73,769.27 L261.22,769.26 L262.71,769.26 L264.20,769.26 L265.68,769.26 L267.17,769.26 L268.66,769.26 L270.15,769.26 L271.64,769.26 L273.13,769.26 L274.62,769.26 L276.10,769.26 L277.59,769.26 L279.08,769.26 L280.57,769.26 L282.06,769.26 L283.55,769.25 L285.03,769.25 L286.52,769.25 L288.01,769.25 L289.50,769.25 L290.99,769.25 L292.48,769.25 L293.97,769.25 L295.45,769.25 L296.94,769.25 L298.43,769.25 L299.92,769.25 L301.41,769.25 L302.90,769.25 L304.38,769.25 L305.87,769.25 L307.36,769.25 L308.85,769.25 L310.34,769.25 L311.83,769.25 L313.32,769.25 L314.80,769.25 L316.29,769.25 L317.78,769.25 L319.27,769.25 L320.76,769.25 L322.25,769.25 L323.73,769.25 L325.22,769.25 L326.71,769.25 L328.20,769.25 L329.69,769.25 L331.18,769.25 L332.67,769.25 L334.15,769.25 L335.64,769.25 L337.13,769.25 L338.62,769.25 L340.11,769.25 L341.60,769.25 L343.08,769.25 L344.57,769.25 L346.06,769.25 L347.55,769.25 L349.04,769.25 L350.53,769.25 L352.02,769.25 L353.50,769.25 L354.99,769.25 L356.48,769.25 L357.97,769.25 L359.46,769.25 L360.95,769.25 L362.43,769.25 L363.92,769.25 L365.41,769.25 L366.90,769.25 L368.39,769.25 L369.88,769.25 L371.37,769.25 L372.85,769.25 L374.34,769.25 L375.83,769.25 L377.32,769.25 L378.81,769.25 L380.30,769.25 L381.78,769.25 L383.27,769.25 L384.76,769.25 L386.25,769.25 L387.74,769.25 L389.23,769.25 L390.72,769.25 L392.20,769.25 L393.69,769.25 L395.18,769.25 L396.67,769.25 L398.16,769.25 L399.65,769.25 L401.13,769.25 L402.62,769.25 L404.11,769.25 L405.60,769.25 L407.09,769.25 L408.58,769.25 L410.07,769.25 L411.55,769.25 L413.04,769.25 L414.53,769.25 L416.02,769.25 L417.51,769.25 L419.00,769.25 L420.48,769.25 L421.97,769.25 L423.46,769.25 L424.95,769.25 L426.44,769.25 L427.93,769.25 L429.42,769.25 L430.90,769.25 L432.39,769.25 L433.88,769.25 L435.37,769.25 L436.86,769.25 L438.35,769.25 L439.83,769.25 L441.32,769.25 L442.81,769.25 L444.30,769.25 L444.50,769.25 L446.60,784.00 L449.00,799.50 L452.00,817.00 L455.00,829.10 L455.50,832.89 L456.00,836.58 L456.50,840.18 L457.00,843.70 L457.50,847.13 L458.00,850.47 L458.50,853.74 L459.00,856.92 L459.50,860.03 L460.00,863.06 L460.50,866.02 L461.00,868.90 L461.50,871.72 L462.00,874.46 L462.50,877.14 L463.00,879.75 L463.50,882.30 L464.00,884.79 L464.50,887.22 L465.00,889.59 L465.50,891.90 L466.00,894.15 L466.50,896.35 L467.00,898.49 L467.50,900.59 L468.00,902.63 L468.50,904.62 L469.00,906.56 L469.50,908.46 L470.00,910.31 L470.50,912.11 L471.00,913.87 L471.50,915.59 L472.00,917.27 L472.50,918.90 L473.00,920.50 L473.50,922.05 L474.00,923.57 L474.50,925.05 L475.00,926.50 L475.50,927.91 L476.00,929.28 L476.50,930.62 L477.00,931.93 L477.50,933.21 L478.00,934.46 L478.50,935.67 L479.00,936.86 L479.50,938.01 L480.00,939.14 L480.50,940.24 L481.00,941.32 L481.50,942.37 L482.00,943.39 L482.50,944.39 L483.00,945.36 L483.50,946.31 L484.00,947.24 L484.50,948.14 L485.00,949.02 L485.50,949.88 L486.00,950.72 L486.50,951.54 L487.00,952.34 L487.50,953.12 L488.00,953.88 L488.50,954.62 L489.00,955.35 L489.50,956.05 L490.00,956.74 L490.50,957.41 L491.00,958.07 L491.50,958.71 L492.00,959.33 L492.50,959.94 L493.00,960.54 L493.50,961.12 L494.00,961.68 L494.50,962.23 L495.00,962.77 L495.50,963.30 L496.00,963.81 L496.50,964.31 L497.00,964.80 L497.50,965.27 L498.00,965.74 L498.50,966.19 L499.00,966.63 L499.50,967.06 L500.00,967.48 L500.50,967.89 L501.00,968.29 L501.50,968.68 L502.00,969.06 L502.50,969.43 L503.00,969.80 L503.50,970.15 L504.00,970.50 L504.50,970.83 L505.00,971.16 L505.50,971.48 L506.00,971.79 L506.50,972.10 L507.00,972.40 L507.50,972.69 L508.00,972.97 L508.50,973.25 L509.00,973.52 L509.50,973.78 L510.00,974.04 L510.50,974.29 L511.00,974.53 L511.50,974.77 L512.00,975.00 L512.50,975.23 L513.00,975.45 L513.50,975.66 L514.00,975.88 L514.50,976.08 L515.00,976.28 L515.50,976.48 L516.00,976.67 L516.50,976.85 L517.00,977.04 L517.50,977.21 L518.00,977.39 L518.50,977.55 L519.00,977.72" stroke="#ff2020" stroke-width="1.0" fill="none" stroke-linejoin="round"/><path d="M57.30,768.75 L57.30,788.15 L57.30,788.15 L58.81,786.84 L60.32,785.62 L61.83,784.48 L63.35,783.41 L64.86,782.42 L66.37,781.50 L67.88,780.64 L69.39,779.83 L70.90,779.08 L72.41,778.39 L73.93,777.73 L75.44,777.13 L76.95,776.56 L78.46,776.03 L79.97,775.54 L81.48,775.08 L82.99,774.65 L84.51,774.26 L86.02,773.88 L87.53,773.54 L89.04,773.21 L90.55,772.91 L92.06,772.63 L93.57,772.37 L95.08,772.12 L96.60,771.90 L98.11,771.68 L99.62,771.48 L101.13,771.30 L102.64,771.13 L104.15,770.97 L105.66,770.82 L107.18,770.68 L108.69,770.55 L110.20,770.43 L111.71,770.31 L113.22,770.21 L114.73,770.11 L116.24,770.02 L117.76,769.93 L119.27,769.85 L120.78,769.78 L122.29,769.71 L123.80,769.64 L125.31,769.58 L126.82,769.53 L128.34,769.47 L129.85,769.42 L131.36,769.38 L132.87,769.34 L134.38,769.30 L135.89,769.26 L137.40,769.23 L138.92,769.19 L140.43,769.16 L141.94,769.14 L143.45,769.11 L144.96,769.09 L146.47,769.06 L147.98,769.04 L149.50,769.02 L151.01,769.00 L152.52,768.99 L154.03,768.97 L155.54,768.96 L157.05,768.94 L158.56,768.93 L160.08,768.92 L161.59,768.91 L163.10,768.89 L164.61,768.88 L166.12,768.88 L167.63,768.87 L169.14,768.86 L170.65,768.85 L172.17,768.85 L173.68,768.84 L175.19,768.83 L176.70,768.83 L178.21,768.82 L179.72,768.82 L181.23,768.81 L182.75,768.81 L184.26,768.80 L185.77,768.80 L187.28,768.80 L188.79,768.79 L190.30,768.79 L191.81,768.79 L193.33,768.79 L194.84,768.78 L196.35,768.78 L197.86,768.78 L199.37,768.78 L200.88,768.78 L202.39,768.77 L203.91,768.77 L205.42,768.77 L206.93,768.77 L208.44,768.77 L209.95,768.77 L211.46,768.77 L212.97,768.76 L214.49,768.76 L216.00,768.76 L217.51,768.76 L219.02,768.76 L220.53,768.76 L222.04,768.76 L223.55,768.76 L225.07,768.76 L226.58,768.76 L228.09,768.76 L229.60,768.76 L231.11,768.76 L232.62,768.76 L234.13,768.76 L235.65,768.76 L237.16,768.75 L238.67,768.75 L240.18,768.75 L241.69,768.75 L243.20,768.75 L244.71,768.75 L246.22,768.75 L247.74,768.75 L249.25,768.75 L250.76,768.75 L252.27,768.75 L253.78,768.75 L255.29,768.75 L256.80,768.75 L258.32,768.75 L259.83,768.75 L261.34,768.75 L262.85,768.75 L264.36,768.75 L265.87,768.75 L267.38,768.75 L268.90,768.75 L270.41,768.75 L271.92,768.75 L273.43,768.75 L274.94,768.75 L276.45,768.75 L277.96,768.75 L279.48,768.75 L280.99,768.75 L282.50,768.75 L284.01,768.75" stroke="#20b020" stroke-width="1.0" fill="none" stroke-linejoin="round"/><path d="M292.00,768.75 L305.00,768.75" stroke="#30d030" stroke-width="1.0" fill="none" stroke-linejoin="round"/><text x="2" y="1031" font-size="12" fill="#1a1a1a" font-weight="normal" text-anchor="start" textLength="80" lengthAdjust="spacingAndGlyphs" >Press F1 for help</text><text x="1308" y="1031.5" font-size="12" fill="#1a1a1a" font-weight="normal" text-anchor="start" textLength="40" lengthAdjust="spacingAndGlyphs" >Voltage:</text><text x="1363" y="1031.5" font-size="12" fill="#1a1a1a" font-weight="normal" text-anchor="start" textLength="10" lengthAdjust="spacingAndGlyphs" >-5</text><rect x="1377.7" y="1023.3" width="3.7999999999999545" height="8.4" fill="#a8c8f0" /><rect x="1381.5" y="1023.3" width="20.200000000000045" height="8.4" fill="#4a84f0" /><rect x="1401.7" y="1023.3" width="20.0" height="8.4" fill="#3598d0" /><rect x="1421.7" y="1023.3" width="20.0" height="8.4" fill="#22b0a0" /><rect x="1441.7" y="1023.3" width="19.299999999999955" height="8.4" fill="#1cc070" /><rect x="1461" y="1023.3" width="20" height="8.4" fill="#10d848" /><rect x="1481" y="1023.3" width="19.700000000000045" height="8.4" fill="#00f000" /><rect x="1519.3" y="1023.3" width="19.0" height="8.4" fill="#00f000" /><rect x="1538.3" y="1023.3" width="19.700000000000045" height="8.4" fill="#38d818" /><rect x="1558" y="1023.3" width="20" height="8.4" fill="#70b828" /><rect x="1578" y="1023.3" width="20" height="8.4" fill="#a09a30" /><rect x="1598" y="1023.3" width="20" height="8.4" fill="#d08030" /><rect x="1618" y="1023.3" width="20.5" height="8.4" fill="#ff5840" /><rect x="1638.5" y="1023.3" width="3.2000000000000455" height="8.4" fill="#ffb0a0" /><rect x="1381.3" y="1022.5" width="1" height="10" fill="#111" /><rect x="1638.2" y="1022.5" width="1" height="10" fill="#111" /><text x="1506.5" y="1031.5" font-size="12" fill="#1a1a1a" font-weight="normal" text-anchor="start" textLength="6" lengthAdjust="spacingAndGlyphs" >0</text><text x="1648" y="1031.5" font-size="12" fill="#1a1a1a" font-weight="normal" text-anchor="start" textLength="12" lengthAdjust="spacingAndGlyphs" >+5</text><text x="1678" y="1031.5" font-size="12" fill="#1a1a1a" font-weight="normal" text-anchor="start" textLength="27" lengthAdjust="spacingAndGlyphs" >Time:</text><text x="1711.5" y="1031.5" font-size="12" fill="#1a1a1a" font-weight="normal" text-anchor="start" textLength="34" lengthAdjust="spacingAndGlyphs" >5.131 s</text><path d="M1765,1024 l2.5,-2.5 l2.5,2.5 z" fill="#222"/><circle cx="1779" cy="1024" r="3.6" fill="none" stroke="#222" stroke-width="1.3"/><path d="M1781.5,1026.5 l3.5,3.5" stroke="#222" stroke-width="1.6"/><text x="1790" y="1031.5" font-size="12" fill="#1a1a1a" font-weight="normal" text-anchor="start" textLength="27" lengthAdjust="spacingAndGlyphs" >150%</text><path d="M1831,1024 l2.5,-2.5 l2.5,2.5 z" fill="#222"/><rect x="1837.5" y="1019" width="1" height="16" fill="#d8d8d8" /><rect x="1903" y="1019" width="1" height="16" fill="#d8d8d8" /><text x="1844" y="1031.5" font-size="12" fill="#1a1a1a" font-weight="normal" text-anchor="start" textLength="30" lengthAdjust="spacingAndGlyphs" >Ready</text><circle cx="531.25" cy="156" r="2.9" fill="#000" stroke="#e8e8e8" stroke-width="1.5"/><path d="M534.2,156 H555" stroke="#d8d8d8" stroke-width="1.6" fill="none"/><path d="M555,156 H569" stroke="#a03c26" stroke-width="1.6" fill="none"/><path d="M555,156 H569" stroke="#d85a40" stroke-width="1.6" stroke-dasharray="1.8 4.2" fill="none"/><path d="M569,156 H589" stroke="#d8d8d8" stroke-width="1.6" fill="none"/><circle cx="592" cy="156" r="2.9" fill="#000" stroke="#e8e8e8" stroke-width="1.5"/><circle cx="626.6" cy="156" r="2.9" fill="#000" stroke="#e8e8e8" stroke-width="1.5"/><path d="M594.5,154.3 H624.2" stroke="#d8d8d8" stroke-width="1.6" fill="none"/><path d="M629.5,156 H649" stroke="#d8d8d8" stroke-width="1.6" fill="none"/><path d="M649,156 H785" stroke="#a03c26" stroke-width="1.6" fill="none"/><path d="M649,156 H785" stroke="#d85a40" stroke-width="1.6" stroke-dasharray="1.8 4.2" fill="none"/><path d="M785,156 H825.4 V162" stroke="#d8d8d8" stroke-width="1.6" fill="none"/><path d="M811.4,156 V172.5 M807.6,172.5 H815.2" stroke="#d8d8d8" stroke-width="1.6" fill="none"/><path d="M825.4,161 L832,167 L818.8,167 Z" fill="#f0f0f0"/><path d="M825.4,166.5 V172.5 M821,172.5 H830" stroke="#d8d8d8" stroke-width="1.6" fill="none"/><path d="M842.2,172.5 H834.6 M838.4,172.5 V156 H865.5" stroke="#d8d8d8" stroke-width="1.6" fill="none"/><path d="M838.4,179.3 H811.4 V196.5" stroke="#d8d8d8" stroke-width="1.6" fill="none"/><path d="M865.5,156 H1076.4 Q1081.4,156 1081.4,161 V210.5" stroke="#a03c26" stroke-width="1.6" fill="none"/><path d="M865.5,156 H1076.4 Q1081.4,156 1081.4,161 V210.5" stroke="#d85a40" stroke-width="1.6" stroke-dasharray="1.8 4.2" fill="none"/><path d="M688.5,152.2 L692.7,156 L688.5,159.8 Z" fill="#ff1010"/><path d="M749,152.2 L753.2,156 L749,159.8 Z" fill="#ff1010"/><path d="M903.8,152.2 L908.0,156 L903.8,159.8 Z" fill="#ff1010"/><path d="M971.8,152.2 L976.0,156 L971.8,159.8 Z" fill="#ff1010"/><path d="M1039.4,152.2 L1043.6000000000001,156 L1039.4,159.8 Z" fill="#ff1010"/><path d="M663,156 V197" stroke="#a03c26" stroke-width="1.6" fill="none"/><path d="M663,156 V197" stroke="#d85a40" stroke-width="1.6" stroke-dasharray="1.8 4.2" fill="none"/><path d="M663,197 V231.5 M663,243 V277.5" stroke="#d8d8d8" stroke-width="1.6" fill="none"/><rect x="645.85" y="231.2" width="34.3" height="4" fill="#f4f4f4"/><rect x="645.85" y="239.3" width="34.3" height="4" fill="#f4f4f4"/><path d="M663,277.5 V286 Q663,291 668,291 H811.4" stroke="#007e00" stroke-width="1.6" fill="none"/><path d="M663,277.5 V286 Q663,291 668,291 H811.4" stroke="#00c400" stroke-width="1.6" stroke-dasharray="1.5 4.4" fill="none"/><path d="M717,156 V183.4" stroke="#a03c26" stroke-width="1.6" fill="none"/><path d="M717,156 V183.4" stroke="#d85a40" stroke-width="1.6" stroke-dasharray="1.8 4.2" fill="none"/><path d="M713.2,171 L717,175.2 L720.8,171 Z" fill="#ff1010"/><path d="M717,183.4 V209.5 M717,237 V264.2" stroke="#d8d8d8" stroke-width="1.6" fill="none"/><rect x="711.8" y="209.79999999999998" width="10.4" height="27.000000000000007" fill="#7a4000" stroke="#e8e8e8" stroke-width="1.5"/><path d="M717,264.2 V304.9" stroke="#007e00" stroke-width="1.6" fill="none"/><path d="M717,264.2 V304.9" stroke="#00c400" stroke-width="1.6" stroke-dasharray="1.5 4.4" fill="none"/><path d="M713.2,273 L717,277.2 L720.8,273 Z" fill="#00ff00"/><path d="M717,304.9 V331.5 M717,358.5 V385.4" stroke="#d8d8d8" stroke-width="1.6" fill="none"/><rect x="711.8" y="331.7" width="10.4" height="26.400000000000013" fill="#7a4000" stroke="#e8e8e8" stroke-width="1.5"/><path d="M717,385.4 V454" stroke="#007e00" stroke-width="1.6" fill="none"/><path d="M717,385.4 V454" stroke="#00c400" stroke-width="1.6" stroke-dasharray="1.5 4.4" fill="none"/><path d="M713.2,405.5 L717,401.3 L720.8,405.5 Z" fill="#00ff00"/><path d="M713.2,444.8 L717,440.6 L720.8,444.8 Z" fill="#00ff00"/><path d="M717,454 V488 M717,499 V534" stroke="#d8d8d8" stroke-width="1.6" fill="none"/><rect x="700.0" y="487.6" width="34" height="4" fill="#f4f4f4"/><rect x="700.0" y="495.7" width="34" height="4" fill="#f4f4f4"/><path d="M717,534 V556 Q717,561 722,561 H1076.4 Q1081.4,561 1081.4,556 V411.9" stroke="#007e00" stroke-width="1.6" fill="none"/><path d="M717,534 V556 Q717,561 722,561 H1076.4 Q1081.4,561 1081.4,556 V411.9" stroke="#00c400" stroke-width="1.6" stroke-dasharray="1.5 4.4" fill="none"/><path d="M713.2,550 L717,545.8 L720.8,550 Z" fill="#00ff00"/><path d="M767,557.2 L762.8,561 L767,564.8 Z" fill="#00ff00"/><path d="M908.3,557.2 L904.0999999999999,561 L908.3,564.8 Z" fill="#00ff00"/><path d="M1043.3,557.2 L1039.1,561 L1043.3,564.8 Z" fill="#00ff00"/><path d="M762.5,287.2 L766.7,291 L762.5,294.8 Z" fill="#00ff00"/><path d="M811.4,196.5 V318.8" stroke="#007e00" stroke-width="1.6" fill="none"/><path d="M811.4,196.5 V318.8" stroke="#00c400" stroke-width="1.6" stroke-dasharray="1.5 4.4" fill="none"/><path d="M807.6,305.5 L811.4,309.7 L815.1999999999999,305.5 Z" fill="#00ff00"/><path d="M811.4,318.8 V345 H828.7" stroke="#d8d8d8" stroke-width="1.6" fill="none"/><path d="M828.7,338.3 V351.8 M828.7,355.2 V362.6 M828.7,368 V375.4" stroke="#d8d8d8" stroke-width="1.6" fill="none"/><path d="M828.7,358.8 H811.4 V398.75 M811.4,371.6 H828.7" stroke="#d8d8d8" stroke-width="1.6" fill="none"/><path d="M815,352.2 L822.8,358.8 L815,365.4 Z" fill="#f0f0f0"/><path d="M834.4,345 V372 H852" stroke="#d8d8d8" stroke-width="1.6" fill="none"/><path d="M852,372 H946.3" stroke="#a03c26" stroke-width="1.6" fill="none"/><path d="M852,372 H946.3" stroke="#d85a40" stroke-width="1.6" stroke-dasharray="1.8 4.2" fill="none"/><path d="M811.4,398.75 V561" stroke="#007e00" stroke-width="1.6" fill="none"/><path d="M811.4,398.75 V561" stroke="#00c400" stroke-width="1.6" stroke-dasharray="1.5 4.4" fill="none"/><path d="M807.6,478 L811.4,482.2 L815.1999999999999,478 Z" fill="#00ff00"/><path d="M811.4,561 V588" stroke="#d8d8d8" stroke-width="1.6" fill="none"/><path d="M798.6,588.5 H825.4 M802,593.5 H819.5 M806,598.8 H815.6" stroke="#d8d8d8" stroke-width="1.6" fill="none"/><path d="M717,426 H838.8" stroke="#007e00" stroke-width="1.6" fill="none"/><path d="M717,426 H838.8" stroke="#00c400" stroke-width="1.6" stroke-dasharray="1.5 4.4" fill="none"/><path d="M838.8,426 H859" stroke="#d8d8d8" stroke-width="1.6" fill="none"/><circle cx="862" cy="426" r="2.9" fill="#000" stroke="#e8e8e8" stroke-width="1.5"/><circle cx="896.3" cy="426" r="2.9" fill="#000" stroke="#e8e8e8" stroke-width="1.5"/><path d="M862,419.1 H897 M879.4,415.3 V419.1 M872.6,415.3 H886" stroke="#d8d8d8" stroke-width="1.6" fill="none"/><path d="M899.2,426 H920" stroke="#d8d8d8" stroke-width="1.6" fill="none"/><path d="M920,426 H941.3 Q946.3,426 946.3,421 V331.3" stroke="#a03c26" stroke-width="1.6" fill="none"/><path d="M920,426 H941.3 Q946.3,426 946.3,421 V331.3" stroke="#d85a40" stroke-width="1.6" stroke-dasharray="1.8 4.2" fill="none"/><path d="M946.3,156 V251" stroke="#a03c26" stroke-width="1.6" fill="none"/><path d="M946.3,156 V251" stroke="#d85a40" stroke-width="1.6" stroke-dasharray="1.8 4.2" fill="none"/><path d="M946.3,251 V277.5 M946.3,304 V331.3" stroke="#d8d8d8" stroke-width="1.6" fill="none"/><rect x="941.0999999999999" y="277.9" width="10.4" height="25.700000000000024" fill="#7a4000" stroke="#e8e8e8" stroke-width="1.5"/><path d="M1000.5,156 V251" stroke="#a03c26" stroke-width="1.6" fill="none"/><path d="M1000.5,156 V251" stroke="#d85a40" stroke-width="1.6" stroke-dasharray="1.8 4.2" fill="none"/><path d="M996.7,201 L1000.5,205.2 L1004.3,201 Z" fill="#ff1010"/><path d="M1000.5,251 V277.5 M1000.5,304 V331.3" stroke="#d8d8d8" stroke-width="1.6" fill="none"/><rect x="995.3" y="277.9" width="10.4" height="25.700000000000024" fill="#7a4000" stroke="#e8e8e8" stroke-width="1.5"/><path d="M1000.5,331.3 V561" stroke="#007e00" stroke-width="1.6" fill="none"/><path d="M1000.5,331.3 V561" stroke="#00c400" stroke-width="1.6" stroke-dasharray="1.5 4.4" fill="none"/><path d="M996.7,444.5 L1000.5,448.7 L1004.3,444.5 Z" fill="#00ff00"/><path d="M1077.6000000000001,181 L1081.4,185.2 L1085.2,181 Z" fill="#ff1010"/><defs><radialGradient id="glow" cx="0.5" cy="0.5" r="0.5"><stop offset="0" stop-color="#b05858" stop-opacity="0.7"/><stop offset="0.4" stop-color="#a85454" stop-opacity="0.7"/><stop offset="0.48" stop-color="#8a4848" stop-opacity="0.6"/><stop offset="0.62" stop-color="#683636" stop-opacity="0.42"/><stop offset="0.78" stop-color="#482828" stop-opacity="0.3"/><stop offset="0.9" stop-color="#301a1a" stop-opacity="0.14"/><stop offset="1" stop-color="#200f0f" stop-opacity="0"/></radialGradient><radialGradient id="ledc" cx="0.5" cy="0.5" r="0.5"><stop offset="0" stop-color="#ff6a6a"/><stop offset="1" stop-color="#ff4646"/></radialGradient></defs><circle cx="1081.7" cy="250.5" r="54" fill="url(#glow)"/><circle cx="1081.7" cy="250.5" r="21.8" fill="url(#ledc)"/><path d="M1081.4,210.5 V240.8 M1081.4,261.5 V290.7" stroke="#d8d8d8" stroke-width="1.5" fill="none"/><path d="M1069.3,240.8 H1096.3 L1081.6,261.7 Z M1069,262.2 H1096" stroke="#f8d8d8" stroke-width="1.1" fill="none"/><path d="M1104,263 L1116,274 M1097,271 L1108,281" stroke="#f8e0e0" stroke-width="1.4"/><path d="M1117,275 L1110.5,273.8 L1115.2,269 Z M1109,282 L1102.5,280.8 L1107.2,276 Z" fill="#f8e0e0"/><path d="M1081.4,290.7 V332" stroke="#707014" stroke-width="1.6" fill="none"/><path d="M1081.4,290.7 V332" stroke="#a0a020" stroke-width="1.6" stroke-dasharray="2 4" fill="none"/><path d="M1077.6000000000001,309.5 L1081.4,313.7 L1085.2,309.5 Z" fill="#a09010"/><path d="M1081.4,332 V358.6 M1081.4,385.5 V411.9" stroke="#d8d8d8" stroke-width="1.6" fill="none"/><rect x="1076.2" y="359.0" width="10.4" height="26.1" fill="#7a4000" stroke="#e8e8e8" stroke-width="1.5"/><path d="M1077.6000000000001,484.5 L1081.4,488.7 L1085.2,484.5 Z" fill="#00ff00"/><circle cx="663" cy="156" r="4" fill="#f86448"/><circle cx="717" cy="156" r="4" fill="#f86448"/><circle cx="946.3" cy="156" r="4" fill="#f86448"/><circle cx="1000.5" cy="156" r="4" fill="#f86448"/><circle cx="811.4" cy="291" r="4" fill="#00f000"/><circle cx="717" cy="291" r="4" fill="#00f000"/><circle cx="717" cy="426" r="4" fill="#00f000"/><circle cx="811.4" cy="561" r="4" fill="#00f000"/><circle cx="1000.5" cy="561" r="4" fill="#00f000"/><circle cx="946.3" cy="372" r="4" fill="#f86448"/><path d="M811.4,291 L823.15,276.25 L826.9,280.4 Z" fill="#00c000"/><path d="M823.15,276.25 L826.9,280.4 L832.6999999999999,275 L829.1999999999999,270.7 Z" fill="#ffffff"/><path d="M820.1999999999999,272.9 L830.1999999999999,282.9" stroke="#909090" stroke-width="0.8"/><path d="M832.3,270 L831.1,266.25 L827.6999999999999,263.75 L827.6999999999999,259.2 L829.4,257.3 L834.8,257.3 L840.1999999999999,263.3 L846.9,263.3 L852.3,257.5" stroke="#c8c8c8" stroke-width="1.3" fill="none" stroke-linejoin="round"/><path d="M717,426 L728.75,411.25 L732.5,415.4 Z" fill="#ff0000"/><path d="M728.75,411.25 L732.5,415.4 L738.3,410 L734.8,405.7 Z" fill="#ffffff"/><path d="M725.8,407.9 L735.8,417.9" stroke="#909090" stroke-width="0.8"/><path d="M737.9,405 L736.7,401.25 L733.3,398.75 L733.3,394.2 L735,392.3 L740.4,392.3 L745.8,398.3 L752.5,398.3 L757.9,392.5" stroke="#c8c8c8" stroke-width="1.3" fill="none" stroke-linejoin="round"/><path d="M946.3,372 L958.05,357.25 L961.8,361.4 Z" fill="#0000ff"/><path d="M958.05,357.25 L961.8,361.4 L967.5999999999999,356 L964.0999999999999,351.7 Z" fill="#ffffff"/><path d="M955.0999999999999,353.9 L965.0999999999999,363.9" stroke="#909090" stroke-width="0.8"/><path d="M967.1999999999999,351 L966.0,347.25 L962.5999999999999,344.75 L962.5999999999999,340.2 L964.3,338.3 L969.6999999999999,338.3 L975.0999999999999,344.3 L981.8,344.3 L987.1999999999999,338.5" stroke="#c8c8c8" stroke-width="1.3" fill="none" stroke-linejoin="round"/><text x="521.8" y="160.7" font-size="13" fill="#ececec" text-anchor="end">5V</text><text x="608.5" y="179.3" font-size="13" fill="#ececec" text-anchor="middle">SW2</text><text x="814.8" y="128.3" font-size="13" fill="#ececec" text-anchor="middle">Q1</text><text x="823.8" y="141.9" font-size="13" fill="#ececec" text-anchor="middle">ZVP2106A</text><text x="637.9" y="233.2" font-size="13" fill="#ececec" text-anchor="end">C1</text><text x="639" y="248.2" font-size="13" fill="#ececec" text-anchor="end">0.1&#181;F</text><text x="702.3" y="219.7" font-size="13" fill="#ececec" text-anchor="end">R1</text><text x="703.4" y="236.8" font-size="13" fill="#ececec" text-anchor="end">10k</text><text x="703.6" y="341" font-size="13" fill="#ececec" text-anchor="end">R2</text><text x="703.6" y="357.2" font-size="13" fill="#ececec" text-anchor="end">100k</text><text x="803.2" y="393" font-size="13" fill="#ececec" text-anchor="end">Q2</text><text x="803.2" y="409.7" font-size="13" fill="#ececec" text-anchor="end">2N7000</text><text x="878" y="448.6" font-size="13" fill="#ececec" text-anchor="middle">SW1</text><text x="933.2" y="287.3" font-size="13" fill="#ececec" text-anchor="end">R3</text><text x="933.2" y="304.2" font-size="13" fill="#ececec" text-anchor="end">47k</text><text x="987" y="287.3" font-size="13" fill="#ececec" text-anchor="end">R4</text><text x="987.2" y="304.2" font-size="13" fill="#ececec" text-anchor="end">22k</text><text x="1056" y="255.2" font-size="13" fill="#ececec" text-anchor="end">D1</text><text x="1068.3" y="367.2" font-size="13" fill="#ececec" text-anchor="end">R5</text><text x="1068.3" y="384.2" font-size="13" fill="#ececec" text-anchor="end">200</text><text x="692.7" y="489.4" font-size="13" fill="#ececec" text-anchor="end">C2</text><text x="692.5" y="506.2" font-size="13" fill="#ececec" text-anchor="end">2.2&#181;F</text><defs><linearGradient id="ul" x1="0" x2="1"><stop offset="0" stop-color="#5050e8"/><stop offset="0.5" stop-color="#9a9af0"/><stop offset="1" stop-color="#ffffff"/></linearGradient></defs><text x="1694.5" y="122.3" font-size="12.5" font-weight="bold" fill="#111" textLength="81" lengthAdjust="spacingAndGlyphs">Push Switches</text><rect x="1694" y="126.89999999999999" width="134" height="1.3" fill="url(#ul)"/><path d="M1698,150 H1710" stroke="#3a3a98" stroke-width="1.1"/><circle cx="1712" cy="150" r="1.8" fill="#fff" stroke="#3a3a98" stroke-width="0.9"/><circle cx="1731" cy="150" r="1.8" fill="#fff" stroke="#3a3a98" stroke-width="0.9"/><path d="M1733.5,150 H1744" stroke="#3a3a98" stroke-width="1.1"/><path d="M1713,147.3 H1730 M1721.5,147.3 V144.7 M1717,144.7 H1726" stroke="#3a3a98" stroke-width="1.1" fill="none"/><text x="1758.8" y="153.3" font-size="10.5" fill="#2a2aff" textLength="90" lengthAdjust="spacingAndGlyphs" text-decoration="underline">Push-to-Make Switch</text><path d="M1698,185.5 H1710" stroke="#3a3a98" stroke-width="1.1"/><circle cx="1712" cy="185.5" r="1.8" fill="#fff" stroke="#3a3a98" stroke-width="0.9"/><circle cx="1731" cy="185.5" r="1.8" fill="#fff" stroke="#3a3a98" stroke-width="0.9"/><path d="M1733.5,185.5 H1744" stroke="#3a3a98" stroke-width="1.1"/><path d="M1714,185.5 H1729 M1721.5,185.5 V181.6 M1717,181.6 H1726" stroke="#3a3a98" stroke-width="1.1" fill="none"/><text x="1758.8" y="189.6" font-size="10.5" fill="#2a2aff" textLength="91" lengthAdjust="spacingAndGlyphs" text-decoration="underline">Push-to-Break Switch</text><text x="1694.5" y="223.8" font-size="12.5" font-weight="bold" fill="#111" textLength="102" lengthAdjust="spacingAndGlyphs">Latching Switches</text><rect x="1694" y="228.4" width="134" height="1.3" fill="url(#ul)"/><path d="M1698,251 H1710" stroke="#3a3a98" stroke-width="1.1"/><circle cx="1712" cy="251" r="1.8" fill="#fff" stroke="#3a3a98" stroke-width="0.9"/><circle cx="1731" cy="251" r="1.8" fill="#fff" stroke="#3a3a98" stroke-width="0.9"/><path d="M1733.5,251 H1744" stroke="#3a3a98" stroke-width="1.1"/><path d="M1713.5,250 L1728,246.6" stroke="#3a3a98" stroke-width="1.1"/><text x="1758.8" y="254.8" font-size="10.5" fill="#2a2aff" textLength="54.5" lengthAdjust="spacingAndGlyphs" text-decoration="underline">SPST Switch</text><path d="M1698,286 H1710" stroke="#3a3a98" stroke-width="1.1"/><circle cx="1712" cy="286" r="1.8" fill="#fff" stroke="#3a3a98" stroke-width="0.9"/><circle cx="1731" cy="279" r="1.8" fill="#fff" stroke="#3a3a98" stroke-width="0.9"/><circle cx="1731" cy="293" r="1.8" fill="#fff" stroke="#3a3a98" stroke-width="0.9"/><path d="M1733.5,279 H1744" stroke="#3a3a98" stroke-width="1.1"/><path d="M1733.5,293 H1744" stroke="#3a3a98" stroke-width="1.1"/><path d="M1713.5,285 L1729,279.5" stroke="#3a3a98" stroke-width="1.1"/><text x="1758.8" y="291" font-size="10.5" fill="#2a2aff" textLength="54.5" lengthAdjust="spacingAndGlyphs" text-decoration="underline">SPDT Switch</text><path d="M1698,315 H1710" stroke="#3a3a98" stroke-width="1.1"/><circle cx="1712" cy="315" r="1.8" fill="#fff" stroke="#3a3a98" stroke-width="0.9"/><circle cx="1731" cy="315" r="1.8" fill="#fff" stroke="#3a3a98" stroke-width="0.9"/><path d="M1733.5,315 H1744" stroke="#3a3a98" stroke-width="1.1"/><path d="M1713.5,314 L1728,310.6" stroke="#3a3a98" stroke-width="1.1"/><path d="M1698,329 H1710" stroke="#3a3a98" stroke-width="1.1"/><circle cx="1712" cy="329" r="1.8" fill="#fff" stroke="#3a3a98" stroke-width="0.9"/><circle cx="1731" cy="329" r="1.8" fill="#fff" stroke="#3a3a98" stroke-width="0.9"/><path d="M1733.5,329 H1744" stroke="#3a3a98" stroke-width="1.1"/><path d="M1713.5,328 L1728,324.6" stroke="#3a3a98" stroke-width="1.1"/><path d="M1721,312 V326" stroke="#3a3a98" stroke-width="1" stroke-dasharray="2 1.5"/><text x="1758.8" y="326.7" font-size="10.5" fill="#2a2aff" textLength="54.5" lengthAdjust="spacingAndGlyphs" text-decoration="underline">DPST Switch</text><path d="M1698,355 H1710" stroke="#3a3a98" stroke-width="1.1"/><circle cx="1712" cy="355" r="1.8" fill="#fff" stroke="#3a3a98" stroke-width="0.9"/><circle cx="1731" cy="347.5" r="1.8" fill="#fff" stroke="#3a3a98" stroke-width="0.9"/><circle cx="1731" cy="362.5" r="1.8" fill="#fff" stroke="#3a3a98" stroke-width="0.9"/><path d="M1733.5,347.5 H1744" stroke="#3a3a98" stroke-width="1.1"/><path d="M1733.5,362.5 H1744" stroke="#3a3a98" stroke-width="1.1"/><path d="M1713.5,354 L1729,348" stroke="#3a3a98" stroke-width="1.1"/><path d="M1698,383.5 H1710" stroke="#3a3a98" stroke-width="1.1"/><circle cx="1712" cy="383.5" r="1.8" fill="#fff" stroke="#3a3a98" stroke-width="0.9"/><circle cx="1731" cy="376.0" r="1.8" fill="#fff" stroke="#3a3a98" stroke-width="0.9"/><circle cx="1731" cy="391.0" r="1.8" fill="#fff" stroke="#3a3a98" stroke-width="0.9"/><path d="M1733.5,376.0 H1744" stroke="#3a3a98" stroke-width="1.1"/><path d="M1733.5,391.0 H1744" stroke="#3a3a98" stroke-width="1.1"/><path d="M1713.5,382.5 L1729,376.5" stroke="#3a3a98" stroke-width="1.1"/><path d="M1721.5,351 V380" stroke="#3a3a98" stroke-width="1" stroke-dasharray="2 1.5"/><text x="1758.8" y="373.9" font-size="10.5" fill="#2a2aff" textLength="55" lengthAdjust="spacingAndGlyphs" text-decoration="underline">DPDT Switch</text><text x="1694.5" y="419.6" font-size="12.5" font-weight="bold" fill="#111" textLength="82.5" lengthAdjust="spacingAndGlyphs">Reed Switches</text><rect x="1694" y="424.20000000000005" width="134" height="1.3" fill="url(#ul)"/><path d="M1720.5,435 V480" stroke="#3a3a98" stroke-width="1.1"/><rect x="1717.5" y="443.5" width="6.5" height="29" rx="3.2" fill="#fff" stroke="#3a3a98" stroke-width="1.1"/><path d="M1720.5,445 V457 L1721.5,460 V472" stroke="#3a3a98" stroke-width="1.1" fill="none"/><text x="1758.8" y="461.6" font-size="10.5" fill="#2a2aff" textLength="79.5" lengthAdjust="spacingAndGlyphs" text-decoration="underline">SPST Reed Switch</text><path d="M1720.5,494 V530 M1722.5,510 V540" stroke="#3a3a98" stroke-width="1.1"/><rect x="1717.5" y="501.5" width="6.5" height="29" rx="3.2" fill="#fff" stroke="#3a3a98" stroke-width="1.1"/><path d="M1720.5,503 V518 M1722.5,512 V528 M1720.5,530 V536 L1713.5,540 V546 M1722.5,530 V536 L1728,540 V546" stroke="#3a3a98" stroke-width="1.1" fill="none"/><text x="1758.8" y="524.1" font-size="10.5" fill="#2a2aff" textLength="79.5" lengthAdjust="spacingAndGlyphs" text-decoration="underline">SPDT Reed Switch</text><text x="1694.5" y="573.4" font-size="12.5" font-weight="bold" fill="#111" textLength="105.5" lengthAdjust="spacingAndGlyphs">Movement Sensors</text><rect x="1694" y="578.0" width="134" height="1.3" fill="url(#ul)"/><path d="M1726,589 V632" stroke="#3a3a98" stroke-width="1.1"/><rect x="1723" y="603" width="6" height="18" fill="#fff" stroke="#3a3a98" stroke-width="1.1"/><path d="M1720,624 L1733,603" stroke="#3a3a98" stroke-width="1.1"/><path d="M1734.5,601 L1730.5,603 L1733.5,605.5 Z" fill="#3a3a98"/><text x="1706" y="614" font-size="7" fill="#222">50k</text><text x="1758.8" y="615.5" font-size="10.5" fill="#2a2aff" textLength="73" lengthAdjust="spacingAndGlyphs" text-decoration="underline">Variable Resistor</text><path d="M1720.5,648 V663 M1717.5,667 V663.5 H1723.5 V667" stroke="#3a3a98" stroke-width="1.1" fill="none"/><rect x="64.0" y="47" width="1" height="17" fill="#c4c4c4"/><rect x="88.0" y="47" width="1" height="17" fill="#c4c4c4"/><rect x="148.0" y="47" width="1" height="17" fill="#c4c4c4"/><rect x="190.0" y="47" width="1" height="17" fill="#c4c4c4"/><rect x="250.0" y="47" width="1" height="17" fill="#c4c4c4"/><rect x="330.0" y="47" width="1" height="17" fill="#c4c4c4"/><rect x="391.0" y="47" width="1" height="17" fill="#c4c4c4"/><rect x="433.0" y="47" width="1" height="17" fill="#c4c4c4"/><rect x="455.0" y="47" width="1" height="17" fill="#c4c4c4"/><path d="M193.3,63.5 V49 q0,-1.5 1.5,-1.5 H210.10000000000002 q1.5,0 1.5,1.5 V63.5" fill="#f6f6f6" stroke="#c4def5" stroke-width="1.2"/><path d="M253.5,63.5 V49 q0,-1.5 1.5,-1.5 H270.3 q1.5,0 1.5,1.5 V63.5" fill="#f6f6f6" stroke="#c4def5" stroke-width="1.2"/><path d="M352.5,63.5 V49 q0,-1.5 1.5,-1.5 H369.3 q1.5,0 1.5,1.5 V63.5" fill="#f6f6f6" stroke="#c4def5" stroke-width="1.2"/><path d="M436.5,63.5 V49 q0,-1.5 1.5,-1.5 H453.3 q1.5,0 1.5,1.5 V63.5" fill="#f6f6f6" stroke="#c4def5" stroke-width="1.2"/><path d="M10.5,51.5 H16.5 L19.5,54.5 V61.5 H10.5 Z" fill="#fff" stroke="#333" stroke-width="1"/><path d="M27.5,53.5 h4 l1,1 h4 v6.5 h-9 z" fill="#f0f080" stroke="#333" stroke-width="0.9"/><path d="M27.5,61 l3,-4.5 h9.5 l-3,4.5 z" fill="#a0a020" stroke="#333" stroke-width="0.9"/><path d="M35,52 q3,-2 4,1" stroke="#222" stroke-width="1.1" fill="none"/><rect x="47" y="51" width="11" height="11" fill="#222"/><rect x="48.5" y="51.8" width="8" height="5" fill="#c8c8b0"/><rect x="47.8" y="51.5" width="9.4" height="9.8" fill="none" stroke="#808020" stroke-width="0.8"/><rect x="54" y="58.5" width="1.5" height="2" fill="#ddd"/><path d="M72,56 V51.5 h8 l1.5,1.5 V56" fill="#eee" stroke="#333" stroke-width="0.9"/><rect x="70" y="56" width="12.5" height="5.5" rx="1" fill="#dcdcdc" stroke="#333" stroke-width="1"/><rect x="73" y="58" width="6" height="1.5" fill="#e0c000"/><path d="M96,51 L101,59 M101,51 L96,59" stroke="#a8a8a8" stroke-width="1"/><circle cx="96" cy="60.5" r="1.7" fill="none" stroke="#a8a8a8"/><circle cx="101" cy="60.5" r="1.7" fill="none" stroke="#a8a8a8"/><rect x="111.5" y="51.5" width="6" height="7" fill="#eee" stroke="#a8a8a8"/><rect x="116.5" y="55.5" width="6.5" height="7" fill="#eee" stroke="#a8a8a8"/><rect x="130.5" y="53" width="9" height="9" rx="1" fill="#c8c8c8" stroke="#a8a8a8"/><rect x="133" y="51.5" width="4" height="2.5" fill="#bbb"/><rect x="136" y="57" width="7" height="5.5" fill="#eee" stroke="#a8a8a8"/><path d="M156.5,56 q3,-5 7,-1 q1.5,2 -0.5,4" stroke="#2050c0" stroke-width="1.6" fill="none"/><path d="M155,53 v5 h4.5 z" fill="#2050c0"/><path d="M182,56 q-3,-5 -7,-1 q-1.5,2 0.5,4" stroke="#a8a8a8" stroke-width="1.6" fill="none"/><path d="M183.5,53 v5 h-4.5 z" fill="#a8a8a8"/><path d="M204,55.5 L207.8,58.8 L204,62 Z" fill="#909090"/><rect x="221.2" y="54.8" width="2.2" height="6.8" fill="#1c1c8a"/><rect x="224.2" y="54.8" width="2.2" height="6.8" fill="#1c1c8a"/><rect x="238.5" y="55.3" width="6.2" height="6.3" fill="#00007e"/><path d="M260,51 V61 L262.3,58.6 L264.2,62.5 L265.8,61.7 L264,58 H267.5 Z" fill="#fff" stroke="#111" stroke-width="0.9"/><path d="M279.3,61.5 L275.6,56.3 q-0.8,-1.3 0.4,-1.7 q1,-0.3 1.9,0.8 L278.6,56.6 V52.6 q0,-1.1 1,-1.1 q1,0 1,1.1 V51.6 q0,-1.1 1.05,-1.1 q1.05,0 1.05,1.1 V52.3 q0,-1 1,-1 q1,0 1,1 V53.4 q0,-0.9 0.95,-0.9 q1,0 1,0.9 V58.2 q0,2 -1.3,3.3" fill="#fff" stroke="#1a1a1a" stroke-width="0.9" stroke-linejoin="round"/><circle cx="298.4" cy="54.8" r="3.7" fill="#e8fcff" stroke="#3a3a3a" stroke-width="1.3"/><path d="M296,53.5 a2.5,2.5 0 0 1 2,-1.8" stroke="#20e8f0" stroke-width="1.2" fill="none"/><path d="M301.2,57.8 L304.8,61.4" stroke="#10107a" stroke-width="2"/><path d="M314.5,51.5 L323,60 M323,51.5 L314.5,60" stroke="#a8a8a8" stroke-width="1.1"/><path d="M337.3,61.8 L342.3,55.8" stroke="#e81818" stroke-width="2"/><path d="M341.8,56.3 L344.6,53" stroke="#1a1a1a" stroke-width="2.2"/><path d="M344.3,53.3 q1.5,-3 2.7,-1.6 q0.6,0.8 0.2,1.6" stroke="#333" stroke-width="0.8" fill="none"/><path d="M355.5,62 V52.5 l1.2,-1 V62" fill="#bdbdbd" stroke="#333" stroke-width="0.7"/><rect x="357.3" y="56" width="2.6" height="5.6" fill="#1818c8" stroke="#222" stroke-width="0.5"/><rect x="360.5" y="52" width="2.6" height="9.6" fill="#f0f000" stroke="#222" stroke-width="0.5"/><rect x="363.7" y="54" width="2.6" height="7.6" fill="#e01010" stroke="#222" stroke-width="0.5"/><path d="M355.5,62.3 H367.5" stroke="#222" stroke-width="1.2"/><path d="M378.6,50.6 h3 v2.6 h-3 z M380.1,53.2 v2.5 M376.2,55.7 h7.6 M376.2,55.7 v4.5 M380.1,55.7 v4.5 M383.8,55.7 v4.5" stroke="#a8a8a8" stroke-width="1" fill="none"/><circle cx="376.2" cy="60.8" r="0.9" fill="#a8a8a8"/><circle cx="380.1" cy="60.8" r="0.9" fill="#a8a8a8"/><circle cx="383.8" cy="60.8" r="0.9" fill="#a8a8a8"/><path d="M397,61.5 L401.2,53.2 V61.5 Z" fill="#a0a0a0"/><path d="M402.6,61.2 H407.8 L402.6,58 Z" fill="none" stroke="#a8a8a8" stroke-width="0.9"/><path d="M402.8,56.5 V53.5 q0,-1.5 2,-1" stroke="#a8a8a8" stroke-width="1" fill="none"/><path d="M404.5,51 l1.8,1.3 l-1.8,1.1 z" fill="#a8a8a8"/><path d="M427.3,61.5 L423.1,53.2 V61.5 Z" fill="#a0a0a0"/><path d="M421.7,61.2 H416.5 L421.7,58 Z" fill="none" stroke="#a8a8a8" stroke-width="0.9"/><path d="M417.5,58 l3.5,-4.5" stroke="#a8a8a8" stroke-width="1" fill="none"/><path d="M420,52.5 l2,0 l-0.6,2 z" fill="#a8a8a8"/><path d="M439.5,56 L448.5,52.5 L452.3,54.5 V58.6 L443,62.2 L439.5,60 Z" fill="#9a1010" stroke="#3a0000" stroke-width="0.7"/><path d="M443,58 V62.2 M443,58 L452.3,54.5" stroke="#5a0000" stroke-width="0.7" fill="none"/><path d="M439.5,56 L443,58" stroke="#5a0000" stroke-width="0.7"/><path d="M442,55.5 L448.8,53 L450.5,54 L443.8,56.5 Z" fill="#e8d830" stroke="#6a5a00" stroke-width="0.4"/><path d="M444,53.8 q2,-3 4.5,-1.5" stroke="#777" stroke-width="0.8" fill="none"/><g transform="translate(0,0)"><path d="M2.5,6.5 L5.5,3.5 L10.5,4 L14.5,6.5 L15.5,7.5 V14 L12,16.5 L4.5,13 L2.5,11.5 Z" fill="#dcdcdc" stroke="#1a1a1a" stroke-width="1.3" stroke-linejoin="round"/><path d="M12.5,9 L15.5,7.5 V14 L12,16.5 Z" fill="#1a1a1a"/><path d="M4,7.5 L11.5,9.5 V15 L4.5,12 Z" fill="#f4f4f4"/><rect x="5" y="8.5" width="2.5" height="3" fill="#0a6a0a"/><circle cx="7.6" cy="11" r="1.1" fill="#111"/><path d="M1,14.3 L5.5,16.3 L9.5,13.5" stroke="#2a2aff" stroke-width="1.5" fill="none"/><path d="M1,14.3 L2.8,15.1 M7.2,15.2 L9.5,13.5" stroke="#e02a2a" stroke-width="1.5" fill="none"/></g><g transform="translate(5,23)"><path d="M2.5,6.5 L5.5,3.5 L10.5,4 L14.5,6.5 L15.5,7.5 V14 L12,16.5 L4.5,13 L2.5,11.5 Z" fill="#dcdcdc" stroke="#1a1a1a" stroke-width="1.3" stroke-linejoin="round"/><path d="M12.5,9 L15.5,7.5 V14 L12,16.5 Z" fill="#1a1a1a"/><path d="M4,7.5 L11.5,9.5 V15 L4.5,12 Z" fill="#f4f4f4"/><rect x="5" y="8.5" width="2.5" height="3" fill="#0a6a0a"/><circle cx="7.6" cy="11" r="1.1" fill="#111"/><path d="M1,14.3 L5.5,16.3 L9.5,13.5" stroke="#2a2aff" stroke-width="1.5" fill="none"/><path d="M1,14.3 L2.8,15.1 M7.2,15.2 L9.5,13.5" stroke="#e02a2a" stroke-width="1.5" fill="none"/></g></svg></body></html>
